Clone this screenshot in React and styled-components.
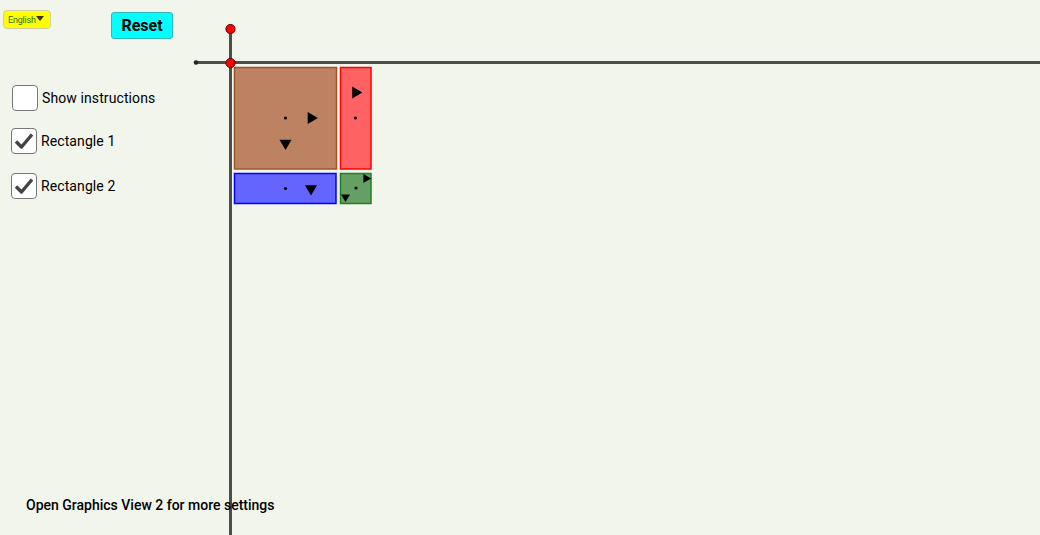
import React, { useState } from 'react';
import styled, { createGlobalStyle } from 'styled-components';

const GlobalStyle = createGlobalStyle`
  html, body {
    margin: 0;
    padding: 0;
    background: #f1f5ec;
    overflow: hidden;
  }
  * { box-sizing: border-box; }
`;

const Applet = styled.div`
  position: relative;
  width: 1040px;
  height: 535px;
  background: #f1f5ec;
  font-family: Roboto, "Liberation Sans", sans-serif;
  color: #000;
`;

const Graphics = styled.svg`
  position: absolute;
  inset: 0;
`;

// widgets are placed on the free GeoGebra canvas
const Widget = styled.div`
  position: absolute;
  left: ${(p) => p.$x}px;
  top: ${(p) => p.$y}px;
`;

const LangSelect = styled.div`
  display: flex;
  align-items: center;
  width: 48px;
  height: 19px;
  padding: 0 0 0 4px;
  background: #ffff00;
  border: 1px solid #cfcfa0;
  border-radius: 4px;
  font-size: 9px;
  color: #2f6b1e;
  letter-spacing: -0.2px;
`;

const Caret = styled.span`
  width: 0;
  height: 0;
  border-left: 4px solid transparent;
  border-right: 4px solid transparent;
  border-top: 5px solid #333;
  margin-top: -2px;
`;

const ResetButton = styled.button`
  width: 62px;
  height: 27px;
  padding: 0;
  background: #00ffff;
  border: 1px solid #33b8b8;
  border-radius: 3px;
  font-family: Roboto, "Liberation Sans", sans-serif;
  font-weight: bold;
  font-size: 16px;
  color: #000;
`;

const CheckList = styled.div`
  display: flex;
  flex-direction: column;
`;

const CheckRow = styled.label`
  display: flex;
  align-items: center;
  gap: 4px;
  height: 26px;
  margin-left: ${(p) => p.$indent || 0}px;
  margin-bottom: ${(p) => p.$after || 0}px;
  font-size: 14px;
  letter-spacing: 0.1px;
`;

const Box = styled.span`
  display: flex;
  align-items: center;
  justify-content: center;
  width: 26px;
  height: 26px;
  background: #fff;
  border: 1px solid #777;
  border-radius: 4px;
`;

const Note = styled.div`
  font-size: 14px;
  font-weight: 500;
  white-space: nowrap;
`;

const Check = () => (
  <svg width="20" height="18" viewBox="0 0 20 18">
    <path d="M2 9.5 L7.5 15 L18 2.5" fill="none" stroke="#444" strokeWidth="3.4" strokeLinejoin="round" />
  </svg>
);

const Tri = ({ x, y, dir, s = 6 }) => {
  const pts =
    dir === 'right'
      ? `${x - s * 0.8},${y - s} ${x + s * 0.9},${y} ${x - s * 0.8},${y + s}`
      : `${x - s},${y - s * 0.8} ${x + s},${y - s * 0.8} ${x},${y + s * 0.9}`;
  return <polygon points={pts} fill="#000" />;
};

const Dot = ({ x, y }) => <circle cx={x} cy={y} r="1.6" fill="#000" />;

const rects = [
  { x: 234.5, y: 67.5, w: 102, h: 101.5, fill: '#bc8262', stroke: '#a0522d' },
  { x: 340.5, y: 67.5, w: 30.5, h: 101.5, fill: '#ff6262', stroke: '#ff0000' },
  { x: 234.5, y: 173.5, w: 101.5, h: 30, fill: '#6464ff', stroke: '#0000ff' },
  { x: 340.5, y: 173.5, w: 30.5, h: 30, fill: '#64a064', stroke: '#1f801f' },
];

export default function App() {
  const [checks, setChecks] = useState({ instr: false, r1: true, r2: true });
  const toggle = (k) => setChecks((c) => ({ ...c, [k]: !c[k] }));

  return (
    <Applet>
      <GlobalStyle />
      <Graphics width="1040" height="535" viewBox="0 0 1040 535">
        <line x1="196" y1="62.5" x2="1040" y2="62.5" stroke="#4b4f49" strokeWidth="3" />
        <line x1="230.5" y1="28" x2="230.5" y2="535" stroke="#4b4f49" strokeWidth="3" />
        <circle cx="196" cy="62.5" r="2.3" fill="#222" />
        {rects.map((r, i) => (
          <rect key={i} x={r.x} y={r.y} width={r.w} height={r.h} fill={r.fill} stroke={r.stroke} strokeWidth="1.5" />
        ))}
        <Dot x={285.5} y={118} />
        <Tri x={312.5} y={118} dir="right" />
        <Tri x={285.5} y={144.5} dir="down" />
        <Dot x={355.5} y={118} />
        <Tri x={357} y={92.5} dir="right" />
        <Dot x={285.5} y={188.5} />
        <Tri x={311} y={190} dir="down" />
        <Dot x={356} y={188} />
        <Tri x={367} y={178.5} dir="right" s={4.5} />
        <Tri x={345.5} y={198} dir="down" s={4.5} />
        <circle cx="230.5" cy="29" r="4.6" fill="#ff0000" stroke="#660000" strokeWidth="1" />
        <circle cx="230.5" cy="63" r="4.6" fill="#ff0000" stroke="#660000" strokeWidth="1" />
      </Graphics>

      <Widget $x={3} $y={10}>
        <LangSelect>
          English<Caret />
        </LangSelect>
      </Widget>

      <Widget $x={111} $y={12}>
        <ResetButton>Reset</ResetButton>
      </Widget>

      <Widget $x={11} $y={85}>
        <CheckList>
          <CheckRow $indent={1} $after={17} onClick={() => toggle('instr')}>
            <Box>{checks.instr && <Check />}</Box>
            Show instructions
          </CheckRow>
          <CheckRow $after={19} onClick={() => toggle('r1')}>
            <Box>{checks.r1 && <Check />}</Box>
            Rectangle 1
          </CheckRow>
          <CheckRow onClick={() => toggle('r2')}>
            <Box>{checks.r2 && <Check />}</Box>
            Rectangle 2
          </CheckRow>
        </CheckList>
      </Widget>

      <Widget $x={26} $y={497}>
        <Note>Open Graphics View 2 for more settings</Note>
      </Widget>
    </Applet>
  );
}
